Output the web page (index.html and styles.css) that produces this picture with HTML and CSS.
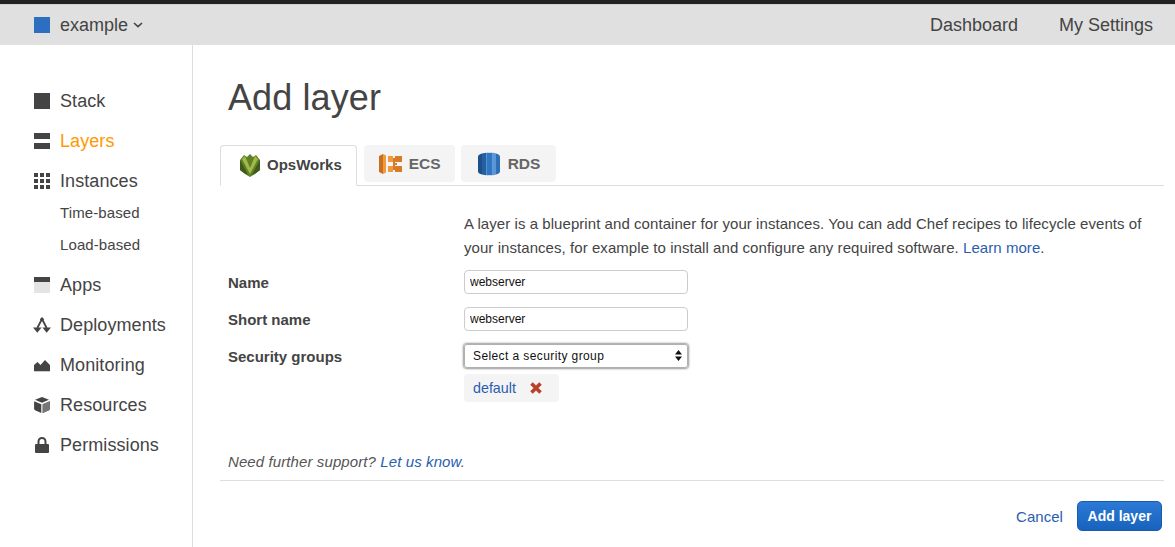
FILE: index.html
```html
<!DOCTYPE html>
<html lang="en">
<head>
<meta charset="utf-8">
<title>Add layer</title>
<link rel="stylesheet" href="styles.css">
</head>
<body>
<header class="topbar">
  <div class="stack-name">
    <span class="stack-swatch"></span>
    <span class="bar-text">example</span>
    <svg class="caret" width="10" height="6" viewBox="0 0 10 6"><path d="M1 1l4 3.600L9 1" fill="none" stroke="#444" stroke-width="1.600"/></svg>
  </div>
  <nav class="topnav"><a class="bar-text">Dashboard</a><a class="bar-text">My Settings</a></nav>
</header>
<div class="shell">
  <aside class="sidebar">
    <a class="nav-item"><svg class="ico" viewBox="0 0 16 16"><rect width="16" height="16" fill="#444"/></svg>Stack</a>
    <a class="nav-item active"><svg class="ico" viewBox="0 0 16 16"><rect width="16" height="6" fill="#444"/><rect y="10" width="16" height="6" fill="#444"/></svg>Layers</a>
    <a class="nav-item"><svg class="ico" viewBox="0 0 16 16" fill="#444"><rect width="4" height="4"/><rect x="6" width="4" height="4"/><rect x="12" width="4" height="4"/><rect y="6" width="4" height="4"/><rect x="6" y="6" width="4" height="4"/><rect x="12" y="6" width="4" height="4"/><rect y="12" width="4" height="4"/><rect x="6" y="12" width="4" height="4"/><rect x="12" y="12" width="4" height="4"/></svg>Instances</a>
    <a class="sub-item">Time-based</a>
    <a class="sub-item">Load-based</a>
    <a class="nav-item"><svg class="ico" viewBox="0 0 16 16"><rect width="16" height="5" fill="#444"/><rect y="5" width="16" height="11" fill="#e4e4e4"/></svg>Apps</a>
    <a class="nav-item"><svg class="ico ico-wide" viewBox="0 0 18 16"><path d="M9 2L4.300 11M9 2l4.700 9" fill="none" stroke="#444" stroke-width="1.800"/><path d="M9 0l2.200 2.200L9 4.400 6.800 2.200z" fill="#444"/><path d="M0 10.500h8.600L4.300 15.800zM9.400 10.500H18l-4.300 5.300z" fill="#444"/></svg>Deployments</a>
    <a class="nav-item"><svg class="ico" viewBox="0 0 16 16"><path d="M0 14V8l3.500-3L6.500 8 11 3l5 5v6z" fill="#444"/><rect y="14" width="16" height="1" fill="#ccc"/></svg>Monitoring</a>
    <a class="nav-item"><svg class="ico" viewBox="0 0 16 16"><path d="M8 0l7 2.800L8 5.800 1 2.800z" fill="#444"/><path d="M.1 4.200l7.200 3V16L1 13.200.1 12zM15.900 4.200l-7.200 3V16l6.300-2.800.9-1.200z" fill="#444"/><path d="M8.700 7.200V16l6.300-2.800.9-1.200V4.200z" fill="#777"/></svg>Resources</a>
    <a class="nav-item"><svg class="ico" viewBox="0 0 16 16"><rect x="1" y="7" width="14" height="9" rx="1" fill="#444"/><path d="M4.500 7.500V4.500a3.500 3.500 0 0 1 7 0v3" fill="none" stroke="#444" stroke-width="2"/></svg>Permissions</a>
  </aside>
  <main class="content">
    <h1 class="title">Add layer</h1>
    <div class="tabs">
      <a class="tab current">
        <svg class="tab-ico" width="22" height="24" viewBox="0 0 22 24"><path d="M5 2l3 2 3-3 3 3 3-2 4 5v10l-5 4-5 3-5-3-5-4V7z" fill="#5f8128"/><path d="M6 3l5 12 5-12 3 3-8 15L3 6z" fill="#a3b94a"/><path d="M1 7l4 7 4 8-4-2-4-3zM21 7l-4 7-4 8 4-2 4-3z" fill="#3f5a1c"/></svg>
        OpsWorks
      </a>
      <a class="tab tab-ecs">
        <svg class="tab-ico" width="24" height="24" viewBox="0 0 24 24"><path d="M0 4l4-2v20l-4-2z" fill="#c96f22"/><path d="M4 2l3 1.500v17L4 22z" fill="#f09a3c"/><path d="M9 4h5v6H9zM9 14h5v6H9z" fill="#f09a3c"/><path d="M14 11h4v2h-4zM16 4h7v6h-7zM16 14h7v6h-7z" fill="#d67b28"/><path d="M14 6h2v12h-2z" fill="#d67b28"/></svg>
        ECS
      </a>
      <a class="tab tab-rds">
        <svg class="tab-ico" width="22" height="24" viewBox="0 0 22 24"><path d="M4 1.500C2 2 0 3 0 4.500v15C0 21 2 22 4 22.500z" fill="#1d4f8c"/><path d="M4 1.500c1.500-.4 3-.6 4.500-.7v22.400c-1.500-.1-3-.3-4.500-.7z" fill="#24609f"/><path d="M8.500.8h6.200v22.400H8.500z" fill="#2f76c4"/><path d="M14.700.8c1.200.1 2.300.3 3.300.7v21c-1 .4-2.100.6-3.300.7z" fill="#5a95d8"/><path d="M18 1.500c2 .5 4 1.500 4 3v15c0 1.500-2 2.500-4 3z" fill="#2f6fb5"/></svg>
        RDS
      </a>
    </div>
    <form class="form">
      <div class="row intro">
        <span class="label"></span>
        <p class="desc">A layer is a blueprint and container for your instances. You can add Chef recipes to lifecycle events of your instances, for example to install and configure any required software. <a class="link">Learn more</a>.</p>
      </div>
      <div class="row field"><label class="label">Name</label><input class="input" type="text" value="webserver"></div>
      <div class="row field"><label class="label">Short name</label><input class="input" type="text" value="webserver"></div>
      <div class="row field"><label class="label">Security groups</label>
        <div class="select">Select a security group
          <svg width="7" height="11" viewBox="0 0 7 11"><path d="M3.500 0L7 4.500H0zM3.500 11L0 6.500h7z" fill="#111"/></svg>
        </div>
      </div>
      <div class="row chip-row">
        <span class="label"></span>
        <span class="chip"><a class="link">default</a>
          <svg width="12" height="12" viewBox="0 0 12 12"><path d="M1.500 1.500l9 9M10.500 1.500l-9 9" stroke="#b8412b" stroke-width="3.600"/></svg>
        </span>
      </div>
    </form>
    <p class="support">Need further support? <a class="link">Let us know</a>.</p>
    <div class="actions">
      <a class="link cancel">Cancel</a>
      <button class="primary" type="button">Add layer</button>
    </div>
  </main>
</div>
</body>
</html>
```

FILE: styles.css
```css
* { box-sizing: border-box; }
html, body { margin: 0; height: 100%; overflow: hidden; }
body {
  width: 1175px;
  height: 547px;
  font-family: "Liberation Sans", Arial, sans-serif;
  color: #444;
  background: #fff;
  display: flex;
  flex-direction: column;
}
.topbar {
  height: 45px;
  flex: none;
  border-top: 4px solid #222;
  background: #e0e0e0;
  box-shadow: inset 0 1px 0 #d0d0d0;
  display: flex;
  justify-content: space-between;
  align-items: center;
  padding: 0 22px 0 34px;
  font-size: 18px;
}
.bar-text { padding-top: 2px; }
.stack-name { display: flex; align-items: center; }
.stack-swatch { width: 16px; height: 16px; background: #2c6ebf; margin-right: 10px; }
.caret { margin-left: 5px; margin-top: 1px; }
.topnav { display: flex; gap: 41px; }
.shell { flex: 1; display: flex; min-height: 0; }
.sidebar {
  width: 193px;
  flex: none;
  border-right: 1px solid #ddd;
  padding-top: 36px;
}
.nav-item {
  display: flex;
  align-items: center;
  height: 40px;
  padding-left: 34px;
  font-size: 18px;
  letter-spacing: .08px;
  color: #444;
}
.nav-item.active { color: #f90; }
.ico { width: 16px; height: 16px; margin-right: 10px; flex: none; }
.ico-wide { width: 18px; margin-left: -1px; margin-right: 9px; }
.sub-item {
  display: flex;
  align-items: center;
  height: 32px;
  padding-left: 60px;
  font-size: 15px;
  letter-spacing: .1px;
}
.nav-item + .sub-item { margin-top: -5px; }
.sub-item + .nav-item { margin-top: 5px; }
.content { flex: 1; padding: 0 11px 0 27px; min-width: 0; }
.title {
  font-size: 36px;
  font-weight: 400;
  line-height: 42px;
  letter-spacing: .1px;
  margin: 32px 0 0 8px;
  color: #444;
}
.tabs {
  display: flex;
  gap: 6px;
  margin-top: 26px;
  height: 41px;
  border-bottom: 1px solid #ddd;
}
.tab {
  display: flex;
  align-items: center;
  gap: 6px;
  height: 37px;
  padding: 0 15px;
  background: #f4f4f4;
  border-radius: 4px;
  font-size: 15.5px;
  font-weight: 700;
  color: #666;
}
.tab.current {
  height: 41px;
  margin-right: 1px;
  padding: 0 14px 2px 18px;
  background: #fff;
  color: #444;
  font-size: 15px;
  border: 1px solid #ddd;
  border-bottom-color: #fff;
  border-radius: 4px 4px 0 0;
}
.tab-ecs { padding-right: 14px; }
.tab-rds { padding: 0 16px 0 17px; gap: 8px; }
.form { padding-left: 8px; }
.row { display: flex; }
.label { width: 236px; flex: none; font-size: 15px; font-weight: 700; color: #444; }
.intro { margin-top: 26px; }
.desc { margin: 0; width: 690px; font-size: 15px; line-height: 24px; letter-spacing: .06px; color: #444; }
.link { color: #2a5db0; }
.field { align-items: center; height: 25px; margin-top: 12px; }
.field .label { padding-top: 2px; }
.intro + .field { margin-top: 9px; }
.input {
  width: 224px;
  height: 24px;
  border: 1px solid #ccc;
  border-radius: 4px;
  padding: 0 5px;
  font: 12px "Liberation Sans", Arial, sans-serif;
  color: #111;
  background: #fff;
}
.select {
  width: 224px;
  height: 24px;
  border-radius: 3px;
  border: 1px solid #b0b0b0;
  box-shadow: 0 0 2px 1px #999;
  padding: 0 5px 0 8px;
  font-size: 12px;
  letter-spacing: .4px;
  color: #111;
  display: flex;
  align-items: center;
  justify-content: space-between;
}
.chip-row { margin-top: 6px; }
.chip {
  display: flex;
  align-items: center;
  gap: 14px;
  width: 95px;
  height: 28px;
  padding-left: 9px;
  background: #f4f4f4;
  border-radius: 4px;
  font-size: 14.3px;
}
.support {
  margin: 51px 0 0 8px;
  font-size: 15px;
  font-style: italic;
  line-height: 18px;
  letter-spacing: .1px;
  color: #555;
}
.actions {
  margin-top: 9px;
  border-top: 1px solid #ddd;
  padding-top: 20px;
  display: flex;
  justify-content: flex-end;
  align-items: center;
  gap: 14px;
  padding-right: 2px;
}
.cancel { font-size: 15px; letter-spacing: .05px; }
.primary {
  width: 85px;
  height: 30px;
  border: 1px solid #1a5bb0;
  border-radius: 5px;
  background: linear-gradient(#2b7ad6, #1862bd);
  color: #fff;
  font: 700 14px "Liberation Sans", Arial, sans-serif;
  padding: 0;
}
```
